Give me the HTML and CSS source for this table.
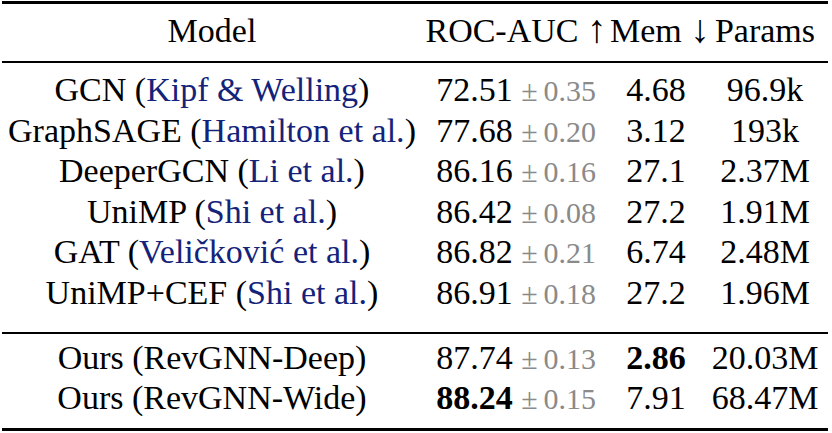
FILE: index.html
```html
<!DOCTYPE html>
<html lang="en">
<head>
    <meta charset="UTF-8">
    <meta name="viewport" content="width=device-width, initial-scale=1.0">
    <title>OGBN-Proteins results</title>
    <link rel="stylesheet" href="styles.css">
</head>
<body>

    <table class="results">
        <colgroup>
            <col class="col-model">
            <col class="col-auc">
            <col class="col-mem">
            <col class="col-params">
        </colgroup>
        <thead>
            <tr>
                <th>Model</th>
                <th>ROC-AUC <span class="arrow">&uarr;</span></th>
                <th>Mem <span class="arrow">&darr;</span></th>
                <th>Params</th>
            </tr>
        </thead>
        <!-- Baselines -->
        <tbody class="baselines">
            <tr>
                <td>GCN (<a class="cite">Kipf &amp; Welling</a>)</td>
                <td>72.51 <span class="std">&plusmn;&#8201;0.35</span></td>
                <td>4.68</td>
                <td>96.9k</td>
            </tr>
            <tr>
                <td>GraphSAGE (<a class="cite">Hamilton et al.</a>)</td>
                <td>77.68 <span class="std">&plusmn;&#8201;0.20</span></td>
                <td>3.12</td>
                <td>193k</td>
            </tr>
            <tr>
                <td>DeeperGCN (<a class="cite">Li et al.</a>)</td>
                <td>86.16 <span class="std">&plusmn;&#8201;0.16</span></td>
                <td>27.1</td>
                <td>2.37M</td>
            </tr>
            <tr>
                <td>UniMP (<a class="cite">Shi et al.</a>)</td>
                <td>86.42 <span class="std">&plusmn;&#8201;0.08</span></td>
                <td>27.2</td>
                <td>1.91M</td>
            </tr>
            <tr>
                <td>GAT (<a class="cite">Veli&#269;kovi&#263; et al.</a>)</td>
                <td>86.82 <span class="std">&plusmn;&#8201;0.21</span></td>
                <td>6.74</td>
                <td>2.48M</td>
            </tr>
            <tr>
                <td>UniMP+CEF (<a class="cite">Shi et al.</a>)</td>
                <td>86.91 <span class="std">&plusmn;&#8201;0.18</span></td>
                <td>27.2</td>
                <td>1.96M</td>
            </tr>
        </tbody>
        <!-- Our models -->
        <tbody class="ours">
            <tr>
                <td>Ours (RevGNN-Deep)</td>
                <td>87.74 <span class="std">&plusmn;&#8201;0.13</span></td>
                <td><b>2.86</b></td>
                <td>20.03M</td>
            </tr>
            <tr>
                <td>Ours (RevGNN-Wide)</td>
                <td><b>88.24</b> <span class="std">&plusmn;&#8201;0.15</span></td>
                <td>7.91</td>
                <td>68.47M</td>
            </tr>
        </tbody>
    </table>

</body>
</html>
```

FILE: styles.css
```css
body {
    margin: 0;
    padding: 1px 0 0 2px;
    background-color: #ffffff;
    color: #000000;
    font-family: 'Liberation Serif', Tinos, 'Times New Roman', Times, serif;
    font-size: 34px;
}
.results {
    width: 826px;
    table-layout: fixed;
    border-collapse: separate;
    border-spacing: 0;
}
.col-model {
    width: 420px;
}
.col-auc {
    width: 188px;
}
.col-mem {
    width: 92px;
}
.col-params {
    width: 126px;
}
.results th, .results td {
    padding: 0;
    text-align: center;
    white-space: nowrap;
    font-weight: normal;
    line-height: 40.6px;
}
.results thead th {
    border-top: 3px solid #000;
    border-bottom: 2px solid #000;
    padding-top: 7px;
    padding-bottom: 9px;
}
.baselines tr:first-child td {
    padding-top: 7.5px;
}
.baselines tr:last-child td {
    padding-bottom: 18px;
}
.ours tr:first-child td {
    border-top: 2px solid #000;
    padding-top: 4px;
}
.ours tr:last-child td {
    border-bottom: 3px solid #000;
    padding-bottom: 9px;
}
.arrow {
    font-size: 1.15em;
    line-height: 0;
}
.cite {
    color: #14237a;
}
.std {
    color: #8a8a8a;
    font-size: 0.88em;
    line-height: 0;
}
b {
    font-weight: bold;
}
```
